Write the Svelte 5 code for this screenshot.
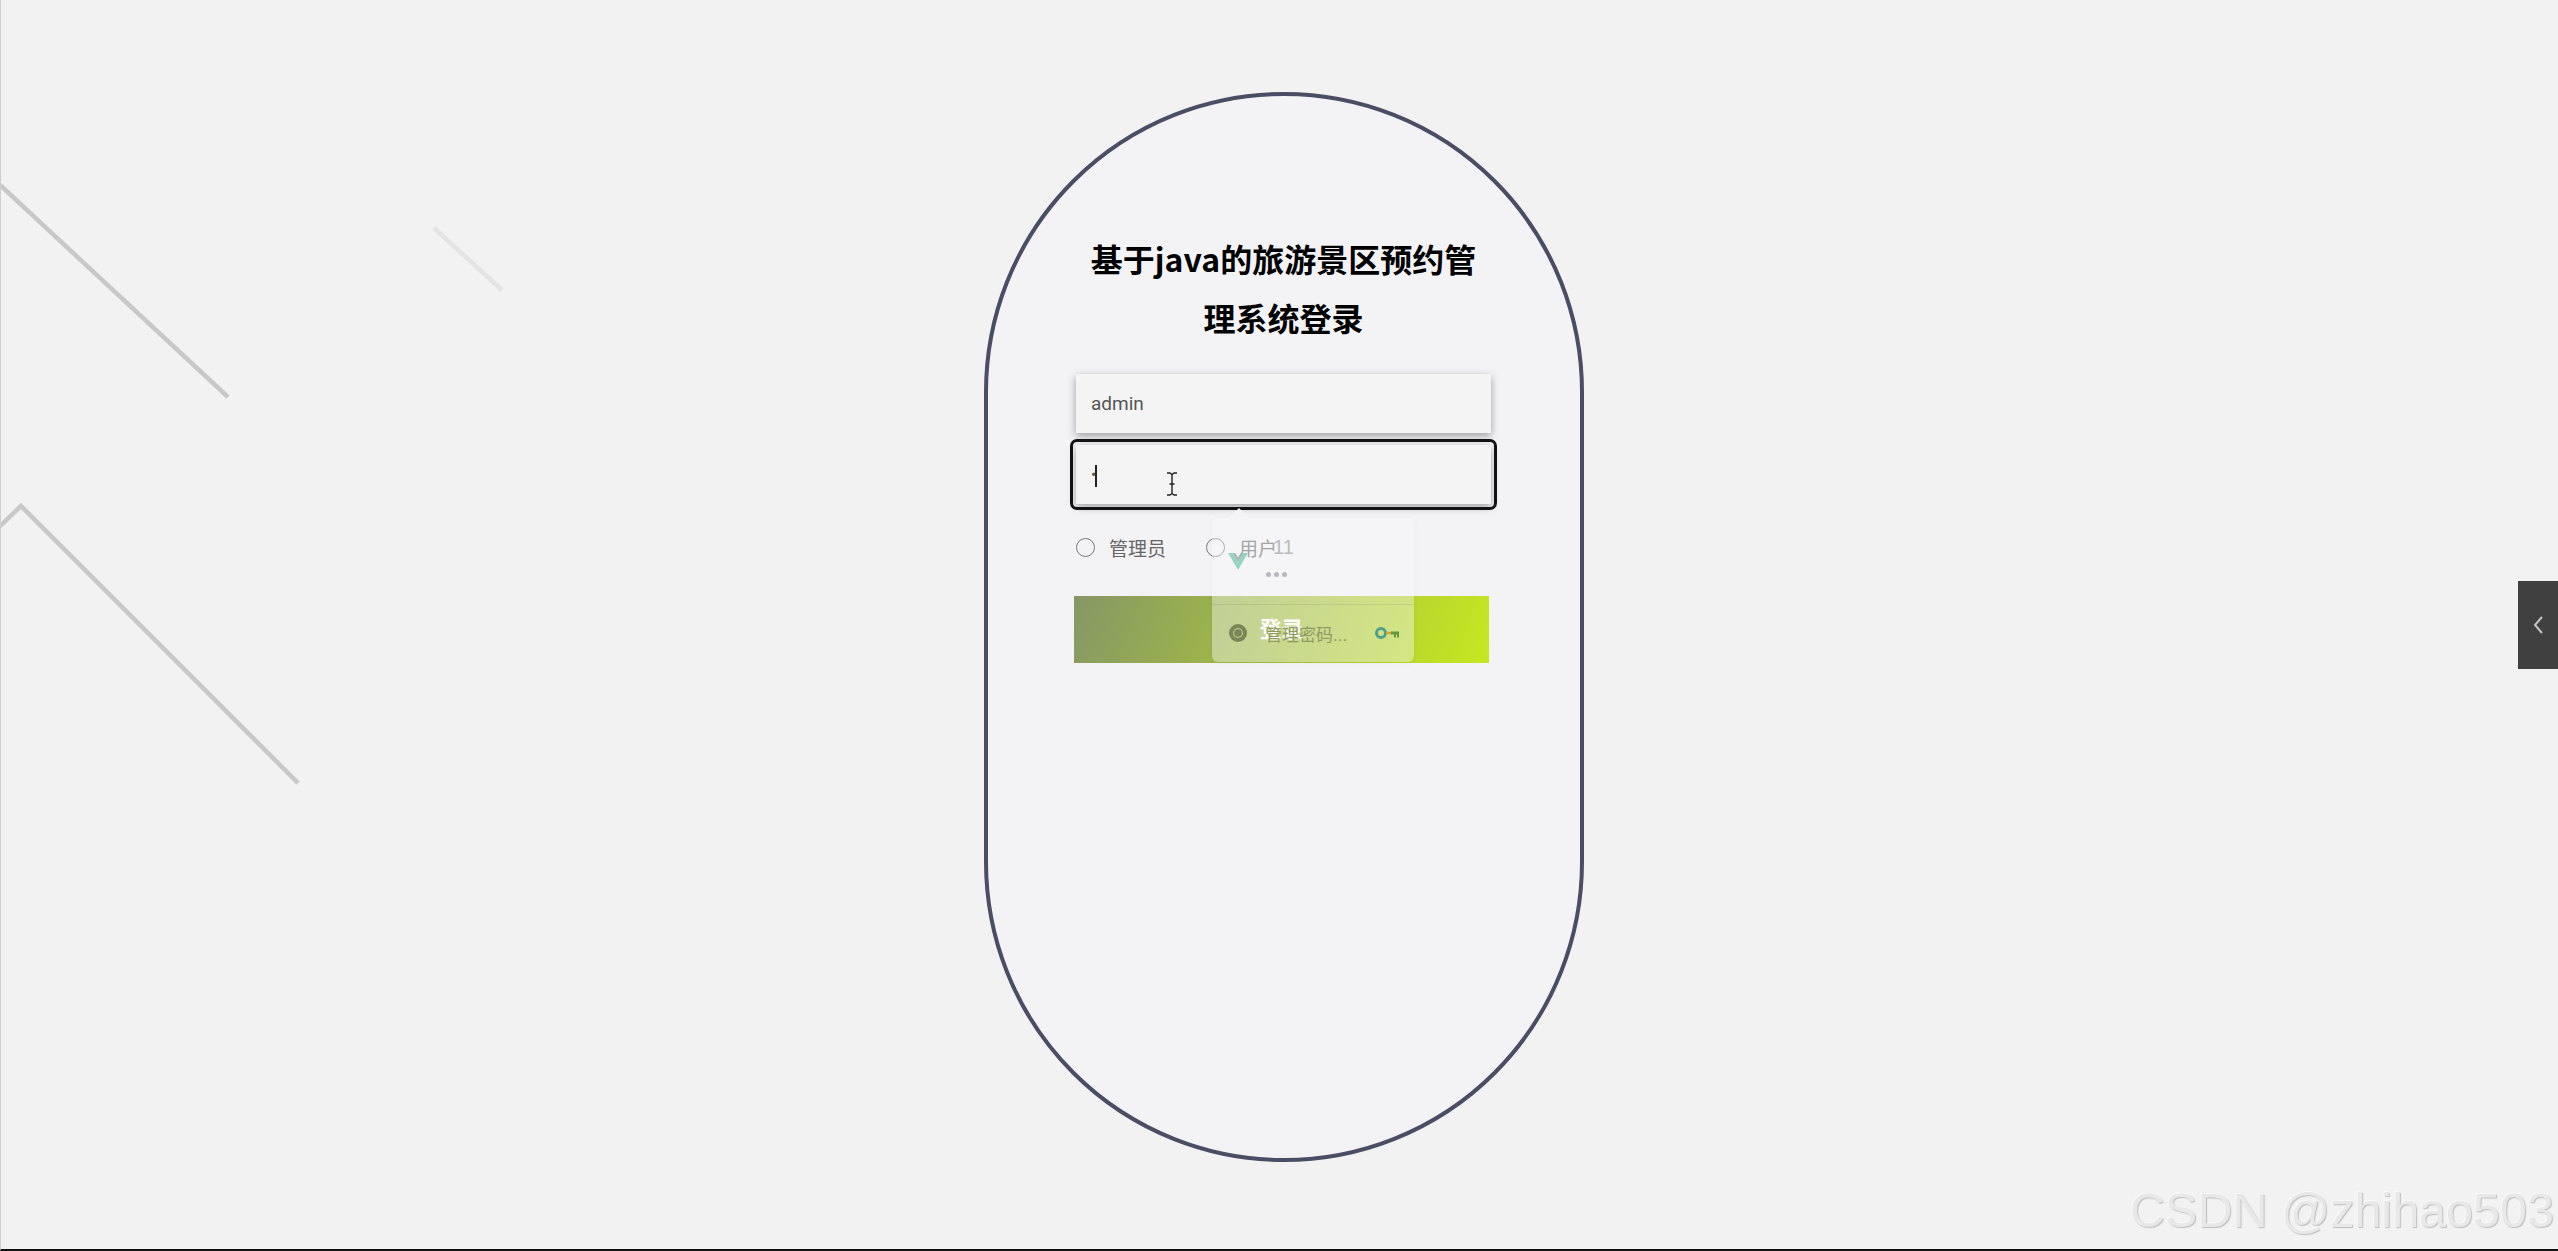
<script lang="ts">
	let username = 'admin';
	let roles = ['管理员', '用户'];
</script>

<div class="page">
	<!-- background strokes -->
	<svg class="lines" width="560" height="800" viewBox="0 0 560 800" aria-hidden="true">
		<polyline points="0,185 228,397" class="stroke" />
		<polyline points="434,228 502,290" class="stroke faint" />
		<polyline points="0,526 21,506 298,783" class="stroke" />
	</svg>

	<main class="capsule">
		<h1>基于java的旅游景区预约管理系统登录</h1>

		<div class="field">{username}</div>
		<div class="field focused">
			<span class="dot">•</span><span class="caret"></span>
			<svg class="ibeam" width="12" height="24" viewBox="0 0 12 24" aria-hidden="true">
				<path d="M1 1h3l2 1.5L8 1h3M6 2.5v19M1 23h3l2-1.500L8 23h3M3.500 12h5" fill="none" stroke="#222" stroke-width="1.400" />
			</svg>
		</div>

		<div class="roles">
			{#each roles as role}
				<label class="role"><span class="radio"></span>{role}</label>
			{/each}
		</div>

		<button class="login">登录</button>

		<div class="popup">
			<span class="popup-arrow"></span>
			<div class="popup-top">
				<svg class="vue" width="20" height="18" viewBox="0 0 22 20" aria-hidden="true">
					<path d="M0 1h5l6 10 6-10h5L11 20z" fill="#93d6c0" />
					<path d="M5 1h3l3 5 3-5h3l-6 10z" fill="#a9b6b5" />
				</svg>
				<span class="popup-name">11</span>
				<span class="more"><i></i><i></i><i></i></span>
			</div>
			<div class="popup-bottom">
				<svg width="18" height="18" viewBox="0 0 18 18" aria-hidden="true">
					<circle cx="9" cy="9" r="9" fill="#78875a" />
					<circle cx="9" cy="9" r="4.400" fill="none" stroke="#b5c47e" stroke-width="1.300" />
				</svg>
				<span class="manage">管理密码...</span>
				<svg class="key" width="24" height="14" viewBox="0 0 24 14" aria-hidden="true">
					<circle cx="6" cy="7" r="4.500" fill="none" stroke="#4f9f8f" stroke-width="3" />
					<path d="M11 7h6" stroke="#d6a72f" stroke-width="2.500" />
					<path d="M16 5.500h8v6h-2v-3h-1v3h-2v-3h-3z" fill="#5f9a3f" />
				</svg>
			</div>
		</div>
	</main>

	<button class="side-tab" aria-label="展开">
		<svg width="12" height="20" viewBox="0 0 12 20" aria-hidden="true">
			<path d="M10 2L3 10l7 8" fill="none" stroke="#c4c4c4" stroke-width="2" />
		</svg>
	</button>

	<div class="watermark">CSDN @zhihao503</div>
</div>

<style>
	:global(body) {
		margin: 0;
		background: #f2f2f3;
		font-family: "Liberation Sans", "Noto Sans CJK SC", sans-serif;
	}

	.page {
		position: relative;
		box-sizing: border-box;
		height: 1251px;
		overflow: hidden;
		padding: 92px 0 0 983px;
		border-left: 1px solid #cfcfcf;
		border-bottom: 2px solid #111;
	}

	.lines {
		position: absolute;
		left: -1px;
		top: 0;
	}

	.stroke {
		fill: none;
		stroke: #c8c8c8;
		stroke-width: 4.500;
	}

	.faint {
		stroke: #e4e4e4;
	}

	.capsule {
		position: relative;
		box-sizing: border-box;
		width: 600px;
		height: 1070px;
		padding: 133px 89px 0 88px;
		border: 4px solid #4a4d63;
		border-radius: 300px;
		background: #f3f3f6;
	}

	h1 {
		margin: 0 0 27px;
		font-family: "Noto Sans CJK SC", sans-serif;
		font-size: 32px;
		font-weight: 700;
		line-height: 59px;
		text-align: center;
		color: #000;
	}

	.field {
		position: relative;
		box-sizing: border-box;
		height: 59px;
		margin-bottom: 12px;
		padding-left: 15px;
		font-family: Roboto, sans-serif;
		font-size: 19px;
		line-height: 59px;
		color: #555;
		background: #f4f4f5;
		box-shadow: 0 3px 8px rgba(0, 0, 0, 0.35);
	}

	.focused {
		outline: 3px solid #111;
		outline-offset: 3px;
		border-radius: 1px;
	}

	.dot {
		font-size: 16px;
		vertical-align: 1px;
	}

	.caret {
		display: inline-block;
		width: 2px;
		height: 22px;
		margin-left: -1px;
		vertical-align: middle;
		background: #222;
	}

	.ibeam {
		position: absolute;
		left: 90px;
		top: 27px;
	}

	.roles {
		display: flex;
		gap: 40px;
		margin-top: 30px;
	}

	.role {
		display: flex;
		align-items: center;
		gap: 14px;
		font-size: 19px;
		color: #666;
	}

	.radio {
		box-sizing: border-box;
		width: 19px;
		height: 19px;
		border: 1.700px solid #777;
		border-radius: 50%;
	}

	.login {
		display: block;
		width: 415px;
		height: 67px;
		margin: 35px 0 0 -2px;
		border: 0;
		padding: 0 0 6px;
		font-family: inherit;
		font-size: 22px;
		font-weight: 700;
		color: #fff;
		background: linear-gradient(110deg, #869765, #c6e820);
	}

	.popup {
		position: absolute;
		left: 224px;
		top: 422px;
		width: 202px;
		height: 144px;
		border-radius: 6px;
		background: rgba(248, 248, 250, 0.42);
		box-shadow: 0 1px 6px rgba(0, 0, 0, 0.04);
		color: #9a9a9a;
	}

	.popup-arrow {
		position: absolute;
		left: 20px;
		top: -7px;
		width: 14px;
		height: 14px;
		background: #f4f4f6;
		transform: rotate(45deg);
	}

	.popup-top {
		position: relative;
		box-sizing: border-box;
		height: 87px;
		border-bottom: 1px solid rgba(0, 0, 0, 0.08);
	}

	.vue {
		position: absolute;
		left: 16px;
		top: 34px;
	}

	.popup-name {
		position: absolute;
		left: 61px;
		top: 18px;
		font-size: 20px;
		color: #bbb;
	}

	.more {
		position: absolute;
		left: 54px;
		top: 54px;
		display: flex;
		gap: 3px;
	}

	.more i {
		width: 5px;
		height: 5px;
		border-radius: 50%;
		background: #b9b9c0;
	}

	.popup-bottom {
		display: flex;
		align-items: center;
		height: 56px;
		padding-left: 17px;
	}

	.manage {
		margin-left: 18px;
		font-size: 17px;
		color: #8f9a62;
	}

	.key {
		margin-left: 28px;
	}

	.side-tab {
		position: absolute;
		right: 0;
		top: 581px;
		display: flex;
		align-items: center;
		justify-content: center;
		width: 40px;
		height: 88px;
		padding: 0;
		border: 0;
		background: #404040;
	}

	.watermark {
		position: absolute;
		right: 4px;
		bottom: 2px;
		font-size: 48.500px;
		line-height: 74px;
		color: #e8e8e8;
		text-shadow: 1px 1px 1px #bdbdbd, -1px -1px 0 #f8f8f8;
	}
</style>
